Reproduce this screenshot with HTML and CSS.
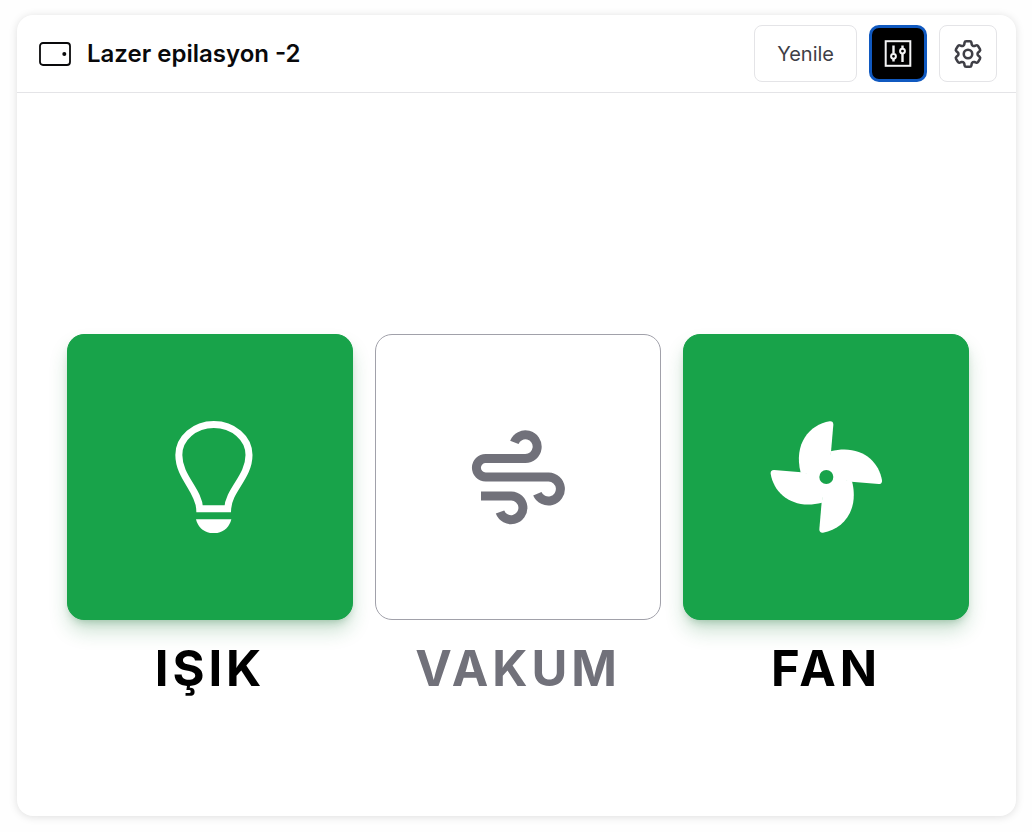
FILE: index.html
```html
<!DOCTYPE html>
<html lang="tr">
<head>
<meta charset="utf-8">
<meta name="viewport" content="width=device-width, initial-scale=1">
<title>Lazer epilasyon -2</title>
<link rel="stylesheet" href="styles.css">
</head>
<body>
<main class="card">
  <header class="card-header">
    <svg class="device-icon" viewBox="0 0 32 24" aria-hidden="true">
      <rect x="1" y="1" width="30" height="22" rx="3" fill="none" stroke="currentColor" stroke-width="1.8"/>
      <circle cx="25.3" cy="12" r="2" fill="currentColor"/>
    </svg>
    <h1 class="title">Lazer epilasyon -2</h1>
    <div class="actions">
      <button class="btn btn-text" type="button">Yenile</button>
      <button class="btn btn-icon btn-active" type="button" aria-label="Kontroller">
        <svg class="sliders-icon" viewBox="0 0 28 28" fill="none" stroke="currentColor" stroke-width="2" aria-hidden="true">
          <rect x="1.7" y="1.2" width="24.6" height="24.6"/>
          <path d="M9.500 5.500v8M9.500 19V21.500M18.500 5.500v2.500M18.500 14V22" stroke-width="2.4"/>
          <circle cx="9.5" cy="16.3" r="2.4"/>
          <circle cx="18.5" cy="11.1" r="2.4"/>
        </svg>
      </button>
      <button class="btn btn-icon" type="button" aria-label="Ayarlar">
        <svg class="gear-icon" viewBox="0 0 24 24" fill="none" stroke="currentColor" stroke-width="1.8" stroke-linejoin="round" aria-hidden="true">
          <path d="M9.594 3.94c.09-.542.56-.94 1.11-.94h2.593c.55 0 1.02.398 1.11.94l.213 1.281c.063.374.313.686.645.87.074.04.147.083.22.127.325.196.72.257 1.075.124l1.217-.456a1.125 1.125 0 0 1 1.37.49l1.296 2.247a1.125 1.125 0 0 1-.26 1.431l-1.003.827c-.293.241-.438.613-.43.992a7.723 7.723 0 0 1 0 .255c-.008.378.137.75.43.991l1.004.827c.424.35.534.955.26 1.43l-1.298 2.247a1.125 1.125 0 0 1-1.369.491l-1.217-.456c-.355-.133-.75-.072-1.076.124a6.47 6.47 0 0 1-.22.128c-.331.183-.581.495-.644.869l-.213 1.281c-.09.543-.56.94-1.11.94h-2.594c-.55 0-1.019-.398-1.11-.94l-.213-1.281c-.062-.374-.312-.686-.644-.87a6.52 6.52 0 0 1-.22-.127c-.325-.196-.72-.257-1.076-.124l-1.217.456a1.125 1.125 0 0 1-1.369-.49l-1.297-2.247a1.125 1.125 0 0 1 .26-1.431l1.004-.827c.292-.24.437-.613.43-.991a6.932 6.932 0 0 1 0-.255c.007-.38-.138-.751-.43-.992l-1.004-.827a1.125 1.125 0 0 1-.26-1.43l1.297-2.247a1.125 1.125 0 0 1 1.37-.491l1.216.456c.356.133.751.072 1.076-.124.072-.044.146-.086.22-.128.332-.183.582-.495.644-.869l.214-1.28Z"/>
          <circle cx="12" cy="12" r="3"/>
        </svg>
      </button>
    </div>
  </header>

  <section class="controls">
    <div class="control control-on">
      <button class="tile" type="button" aria-pressed="true" aria-labelledby="label-light">
        <svg class="tile-icon" viewBox="12 61 336 336" aria-hidden="true">
          <path d="M149 324C146 268 86.500 229 86.500 163C86.500 112 134 71.500 191.500 71.500C249 71.500 297 112 297 163C297 229 236 268 233 324Z" fill="none" stroke="currentColor" stroke-width="21"/>
          <path d="M138 356H244C238 382 217 398 191 398C165 398 144 382 138 356Z" fill="currentColor"/>
        </svg>
      </button>
      <span class="label" id="label-light">IŞIK</span>
    </div>
    <div class="control">
      <button class="tile" type="button" aria-pressed="false" aria-labelledby="label-vacuum">
        <svg class="tile-icon" viewBox="36 31 336 336" fill="none" stroke="currentColor" stroke-width="27" aria-hidden="true">
          <path d="M193 95A35.500 35.500 0 1 1 226 143.500H107A27.750 27.750 0 0 0 107 199H296A36 36 0 1 1 262 249"/>
          <path d="M93 256H184A35.500 35.500 0 1 1 150 304"/>
        </svg>
      </button>
      <span class="label" id="label-vacuum">VAKUM</span>
    </div>
    <div class="control control-on">
      <button class="tile" type="button" aria-pressed="true" aria-labelledby="label-fan">
        <svg class="tile-icon" viewBox="60 61 336 336" aria-hidden="true">
          <defs>
            <path id="blade" d="M229 229L243 154L250 72Q250 61 239 62C178 72 130 130 152 216Z"/>
          </defs>
          <g fill="currentColor">
            <use href="#blade"/>
            <use href="#blade" transform="rotate(90 229 229)"/>
            <use href="#blade" transform="rotate(180 229 229)"/>
            <use href="#blade" transform="rotate(270 229 229)"/>
            <circle cx="229" cy="229" r="60"/>
          </g>
          <circle class="fan-hub" cx="229" cy="229" r="21"/>
        </svg>
      </button>
      <span class="label" id="label-fan">FAN</span>
    </div>
  </section>
</main>
</body>
</html>
```
FILE: styles.css
```css
* {
  box-sizing: border-box;
}

body {
  margin: 0;
  min-height: 100vh;
  padding: 15px 16px 16px 17px;
  display: flex;
  background: #fefefe;
  font-family: Inter, "Liberation Sans", sans-serif;
  color: #09090b;
}

.card {
  flex: 1;
  display: flex;
  flex-direction: column;
  background: #fff;
  border-radius: 16px;
  box-shadow: 0 1px 8px rgba(0, 0, 0, 0.13);
}

.card-header {
  display: flex;
  align-items: center;
  gap: 16px;
  padding: 10px 19px 10px 22px;
  border-bottom: 1px solid #e4e4e7;
}

.device-icon {
  width: 32px;
  height: 24px;
}

.title {
  margin: 0;
  font-size: 24px;
  line-height: 32px;
  font-weight: 600;
}

.actions {
  display: flex;
  gap: 12px;
  margin-left: auto;
}

.btn {
  display: flex;
  align-items: center;
  justify-content: center;
  height: 57px;
  padding: 0 22px;
  border: 1px solid #e4e4e7;
  border-radius: 8px;
  background: #fff;
  color: #3f3f46;
  font: inherit;
  font-size: 20px;
}

.btn-icon {
  width: 58px;
  padding: 0;
}

.btn-active {
  border: 3px solid #1059c0;
  border-radius: 10px;
  background: #000;
  color: #f4f4f5;
}

.sliders-icon {
  width: 28px;
  height: 28px;
}

.gear-icon {
  width: 34px;
  height: 34px;
}

.controls {
  flex: 1;
  display: grid;
  grid-template-columns: repeat(3, 1fr);
  align-content: end;
  gap: 22px;
  padding: 48px 47px 117px 50px;
}

.control {
  display: flex;
  flex-direction: column;
  align-items: center;
  gap: 19px;
  color: #71717a;
}

.tile {
  display: flex;
  align-items: center;
  justify-content: center;
  width: 100%;
  aspect-ratio: 1;
  padding: 0;
  border: 1px solid #a1a1aa;
  border-radius: 17px;
  background: #fff;
  color: #71717a;
}

.tile-icon {
  width: 112px;
  height: 112px;
}

.control-on {
  color: #000;
}

.control-on .tile {
  border-color: #18a34a;
  background: #18a34a;
  color: #fff;
  box-shadow: 0 12px 20px -2px rgba(22, 120, 50, 0.24), 0 5px 8px -4px rgba(22, 100, 50, 0.3);
}

.fan-hub {
  fill: #18a34a;
}

.label {
  font-size: 49px;
  line-height: 60px;
  font-weight: 700;
  letter-spacing: 0.08em;
}
```
